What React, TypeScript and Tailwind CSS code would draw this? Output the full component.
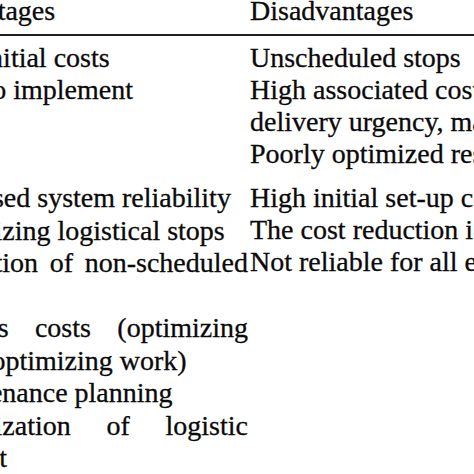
const rows = [
  {
    left: [["Low initial costs"], ["Easy to implement"]],
    right: [
      "Unscheduled stops",
      "High associated costs (spare parts,",
      "delivery urgency, manpower)",
      "Poorly optimized resources",
    ],
    leftLeading: "leading-[32px]",
  },
  {
    left: [
      ["Increased system reliability"],
      ["Optimizing logistical stops"],
      ["Reduction", "of", "non-scheduled"],
      ["stops"],
      ["Process", "costs", "(optimizing"],
      ["parts, optimizing work)"],
      ["Maintenance planning"],
      ["Optimization", "of", "logistic"],
      ["support"],
    ],
    right: [
      "High initial set-up costs",
      "The cost reduction is not immediate",
      "Not reliable for all equipment",
    ],
    leftLeading: "leading-[32.5px]",
  },
];

// a justified line is spread across the cell, one span per word
function Line({ words }: { words: string[] }) {
  if (words.length === 1) {
    return <div className="whitespace-nowrap">{words[0]}</div>;
  }
  return (
    <div className="flex justify-between whitespace-nowrap">
      {words.map((w) => (
        <span key={w}>{w}</span>
      ))}
    </div>
  );
}

export default function App() {
  return (
    <div className="h-[474px] w-[474px] overflow-hidden bg-white text-[#0a0a0a]">
      <div className="-ml-[77px] -mt-[5px] w-[620px] font-['Liberation_Serif',serif] text-[28px] leading-[32px] [-webkit-text-stroke:0.3px_#0a0a0a]">
        <div className="grid grid-cols-[325px_1fr] gap-x-[2px] border-b-2 border-[#1f1f1f] pb-[7px]">
          <div>Advantages</div>
          <div>Disadvantages</div>
        </div>
        {rows.map((row, i) => (
          <div key={i} className="grid grid-cols-[325px_1fr] gap-x-[2px] py-[6px]">
            <div className={row.leftLeading}>
              {row.left.map((words, j) => (
                <Line key={j} words={words} />
              ))}
            </div>
            <div>
              {row.right.map((text) => (
                <div key={text} className="whitespace-nowrap">
                  {text}
                </div>
              ))}
            </div>
          </div>
        ))}
      </div>
    </div>
  );
}
